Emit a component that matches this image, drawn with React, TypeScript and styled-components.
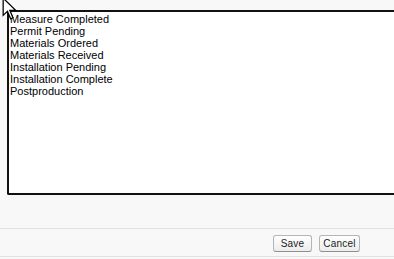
import styled, { createGlobalStyle } from "styled-components";

const GlobalStyle = createGlobalStyle`
  html, body {
    margin: 0;
    padding: 0;
    background: #f8f8f8;
    overflow: hidden;
  }
  body {
    font-family: "Liberation Sans", Arial, sans-serif;
  }
`;

const Page = styled.div`
  position: relative;
  width: 394px;
  height: 259px;
  background: #f8f8f8;
  display: flex;
  flex-direction: column;
`;

const EditArea = styled.div`
  height: 228px;
  padding: 10px 0 0 7px;
  box-sizing: border-box;
`;

const ListBox = styled.div`
  width: 400px;
  height: 185px;
  box-sizing: border-box;
  border: 2px solid #111;
  border-right: none;
  border-radius: 2px 0 0 2px;
  background: #fff;
  padding: 1px 0 0 1px;
  font: 11px/12px "Liberation Sans", Arial, sans-serif;
  color: #000;
`;

const Option = styled.div`
  white-space: nowrap;
`;

const Footer = styled.div`
  height: 29px;
  box-sizing: border-box;
  border-top: 1px solid #e2e2e2;
  border-bottom: 1px solid #e2e2e2;
  display: flex;
  align-items: flex-start;
  justify-content: flex-end;
  gap: 7px;
  padding: 6px 34px 0 0;
`;

const Button = styled.button<{ $width: number }>`
  width: ${(p) => p.$width}px;
  height: 17px;
  box-sizing: border-box;
  padding: 0;
  border: 1px solid #b5b5b5;
  border-bottom-color: #8f8f8f;
  border-radius: 3px;
  background: linear-gradient(#ffffff, #ececec);
  font: 10px/15px "Liberation Sans", Arial, sans-serif;
  color: #222;
  letter-spacing: 0.2px;
  cursor: pointer;
`;

const Cursor = styled.svg`
  position: absolute;
  left: 2px;
  top: -3px;
  pointer-events: none;
`;

const options = [
  "Measure Completed",
  "Permit Pending",
  "Materials Ordered",
  "Materials Received",
  "Installation Pending",
  "Installation Complete",
  "Postproduction",
];

export default function App() {
  return (
    <>
      <GlobalStyle />
      <Page>
        <EditArea>
          <ListBox>
            {options.map((o) => (
              <Option key={o}>{o}</Option>
            ))}
          </ListBox>
        </EditArea>
        <Footer>
          <Button $width={39}>Save</Button>
          <Button $width={41}>Cancel</Button>
        </Footer>
        <Cursor width="15" height="23" viewBox="0 0 13 20">
          <path
            d="M1 1 L1 16 L4.7 12.5 L7.5 19 L9.5 18 L6.8 11.6 L11.8 11.6 Z"
            fill="#fff"
            stroke="#000"
            strokeWidth="1.1"
            strokeLinejoin="miter"
          />
        </Cursor>
      </Page>
    </>
  );
}
